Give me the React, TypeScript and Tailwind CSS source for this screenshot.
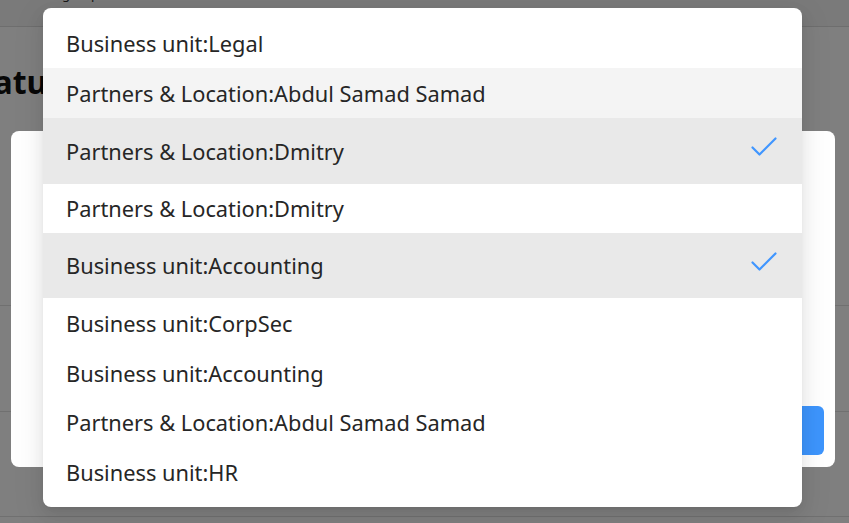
import React from 'react';

type Option = {
  label: string;
  selected?: boolean;
  hover?: boolean;
  h: string;
};

const options: Option[] = [
  { label: 'Business unit:Legal', h: 'h-[50px]' },
  { label: 'Partners & Location:Abdul Samad Samad', hover: true, h: 'h-[50px]' },
  { label: 'Partners & Location:Dmitry', selected: true, h: 'h-[66px]' },
  { label: 'Partners & Location:Dmitry', h: 'h-[49px]' },
  { label: 'Business unit:Accounting', selected: true, h: 'h-[65px]' },
  { label: 'Business unit:CorpSec', h: 'h-[50px]' },
  { label: 'Business unit:Accounting', h: 'h-[50px]' },
  { label: 'Partners & Location:Abdul Samad Samad', h: 'h-[49px]' },
  { label: 'Business unit:HR', h: 'h-[50px]' },
];

const CheckMark = () => (
  <svg width="26" height="20" viewBox="0 0 26 20" fill="none" className="mb-[8px]">
    <path
      d="M1.5 10.5 L8.5 17.5 L24.5 1.5"
      stroke="#4096ff"
      strokeWidth="2.2"
      strokeLinecap="round"
      strokeLinejoin="round"
    />
  </svg>
);

const App = () => {
  return (
    <div className="relative w-[849px] h-[523px] overflow-hidden bg-white font-['Noto_Sans',sans-serif]">
      {/* page under the overlay */}
      <div className="flex flex-col">
        <div className="h-[27px] bg-[#f4f4f4] border-b border-[#dcdcdc] flex items-start overflow-hidden">
          <span className="ml-[62px] -mt-[14px] text-[13px] leading-[17px] text-[#333]">
            group
          </span>
        </div>
        <h1 className="-ml-[38px] mt-[36px] text-[32px] leading-[38px] font-bold text-[#111]">
          Status
        </h1>
        <div className="mt-[204px] border-t border-[#e0e0e0] h-[106px]" />
        <div className="border-t border-[#e0e0e0] h-[105px]" />
        <div className="border-t border-[#e0e0e0]" />
      </div>

      <div className="absolute inset-0 bg-black/50" />

      {/* modal behind dropdown */}
      <div className="absolute left-[11px] top-[131px] w-[824px] h-[336px] bg-white rounded-[8px] flex flex-col justify-end px-[11px] pb-[12px]">
        <div className="flex justify-end">
          <button className="w-[120px] h-[49px] rounded-[6px] bg-[#3d95fd] text-white text-[16px]">
            Save
          </button>
        </div>
      </div>

      {/* dropdown */}
      <div className="absolute left-[43px] top-[8px] w-[759px] h-[499px] bg-white rounded-[8px] py-[10px] shadow-[0_6px_16px_0_rgba(0,0,0,0.08),0_3px_6px_-4px_rgba(0,0,0,0.12),0_9px_28px_8px_rgba(0,0,0,0.05)]">
        <ul className="flex flex-col">
          {options.map((o, i) => (
            <li
              key={i}
              className={`${o.h} flex items-center justify-between pl-[23px] pr-[25px] text-[21.8px] text-[#262626] ${
                o.selected ? 'bg-[#e9e9e9]' : o.hover ? 'bg-[#f4f4f4]' : 'bg-white'
              }`}
            >
              <span className="pt-[2px]">{o.label}</span>
              {o.selected && <CheckMark />}
            </li>
          ))}
        </ul>
      </div>
    </div>
  );
};

export default App;
